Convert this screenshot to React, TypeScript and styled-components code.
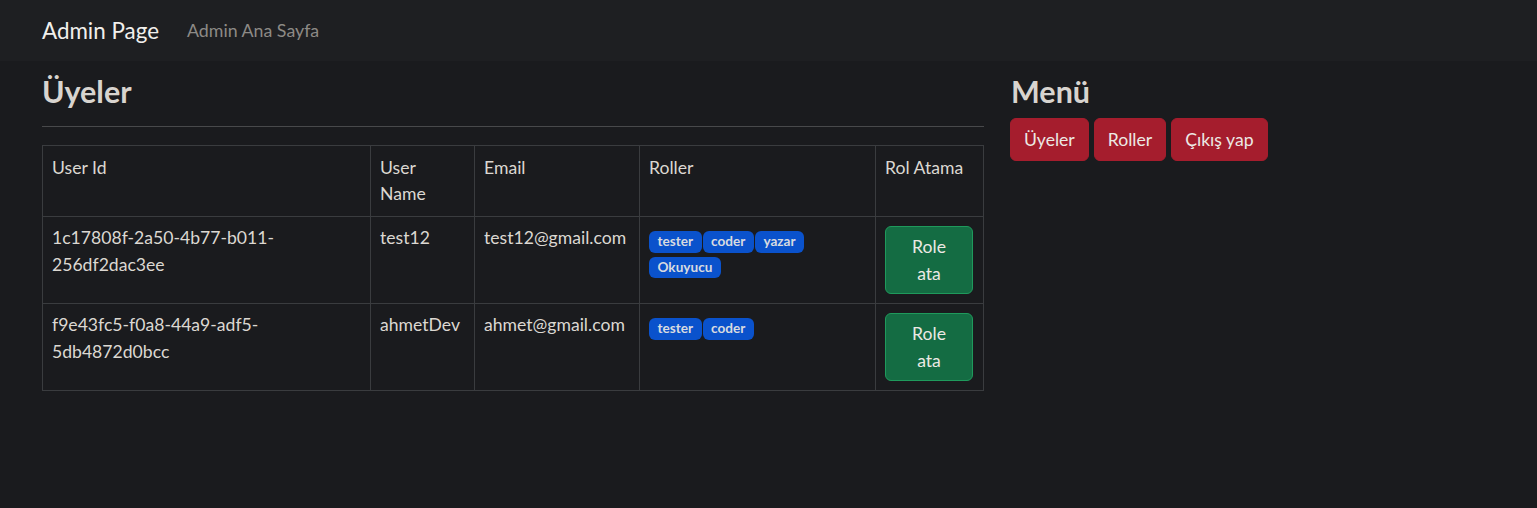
import React from "react";
import styled, { createGlobalStyle } from "styled-components";

const Global = createGlobalStyle`
  html, body { margin: 0; padding: 0; }
  body {
    background: #1a1b1e;
    color: #dcd8d2;
    font-family: "Lato", "Noto Sans", sans-serif;
    font-size: 17.6px;
    line-height: 1.5;
  }
  * { box-sizing: border-box; }
`;

const Navbar = styled.nav`
  height: 61px;
  background: #1e1f22;
  display: flex;
  align-items: center;
  padding: 0 42px;
  gap: 28px;
`;

const Brand = styled.a`
  font-size: 22.4px;
  color: #f1efec;
  text-decoration: none;
`;

const NavLink = styled.a`
  font-size: 17.8px;
  color: #8d8a86;
  text-decoration: none;
`;

const Row = styled.div`
  display: grid;
  grid-template-columns: 966px 1fr;
  padding: 0 30px;
`;

const Col = styled.div<{ $menu?: boolean }>`
  padding: 0 12px 0 ${(p) => (p.$menu ? "15px" : "12px")};
`;

const Heading = styled.h2`
  margin: 12px 0 0;
  font-size: 30.5px;
  font-weight: 700;
  line-height: 1.2;
  color: #d8d4cf;
`;

const Rule = styled.hr`
  margin: 16px 0 18px;
  border: 0;
  border-top: 1px solid #48494b;
`;

const Table = styled.table`
  width: 942px;
  border-collapse: collapse;
  table-layout: fixed;
`;

const Cell = styled.td`
  border: 1px solid #3a3c3f;
  padding: 8px 9px 9px;
  vertical-align: top;
  color: #dcd8d2;
  line-height: 26.4px;
`;

const HeadCell = styled(Cell).attrs({ as: "th" })`
  font-weight: 400;
  text-align: left;
  padding-top: 9px;
`;

const Badges = styled.div`
  display: flex;
  flex-wrap: wrap;
  gap: 4px 1px;
  padding-top: 6px;
`;

const Badge = styled.span`
  display: inline-block;
  background: #0a52cc;
  color: #d8dbe0;
  font-weight: 700;
  font-size: 13.6px;
  line-height: 1;
  padding: 4px 8.5px 3.5px;
  border-radius: 6px;
  min-height: 21px;
`;

const Button = styled.button<{ $variant: "danger" | "success" }>`
  font-family: inherit;
  font-size: 17.6px;
  line-height: 27px;
  padding: 6px 12px;
  border-radius: 6px;
  border: 1px solid ${(p) => (p.$variant === "danger" ? "#a51d2d" : "#1f9a5c")};
  background: ${(p) => (p.$variant === "danger" ? "#a51d2d" : "#146c43")};
  color: #ece9e4;
  cursor: pointer;
`;

const RoleButton = styled(Button)`
  width: 88px;
  margin-top: 1px;
`;

const MenuButton = styled(Button)`
  padding: 7px 13px;
`;

const MenuButtons = styled.div`
  display: flex;
  gap: 5px;
  margin-top: 8px;
  margin-left: -1px;
`;

const users = [
  {
    id: "1c17808f-2a50-4b77-b011-256df2dac3ee",
    name: "test12",
    email: "test12@gmail.com",
    roles: ["tester", "coder", "yazar", "Okuyucu"],
  },
  {
    id: "f9e43fc5-f0a8-44a9-adf5-5db4872d0bcc",
    name: "ahmetDev",
    email: "ahmet@gmail.com",
    roles: ["tester", "coder"],
  },
];

const widths = [328, 104, 165, 236, 108];

export default function App() {
  return (
    <>
      <Global />
      <Navbar>
        <Brand href="#">Admin Page</Brand>
        <NavLink href="#">Admin Ana Sayfa</NavLink>
      </Navbar>
      <Row>
        <Col>
          <Heading>Üyeler</Heading>
          <Rule />
          <Table>
            <colgroup>
              {widths.map((w, i) => (
                <col key={i} style={{ width: w }} />
              ))}
            </colgroup>
            <thead>
              <tr>
                <HeadCell>User Id</HeadCell>
                <HeadCell>User Name</HeadCell>
                <HeadCell>Email</HeadCell>
                <HeadCell>Roller</HeadCell>
                <HeadCell>Rol Atama</HeadCell>
              </tr>
            </thead>
            <tbody>
              {users.map((u) => (
                <tr key={u.id}>
                  <Cell>
                    {u.id.slice(0, 24)}
                    <br />
                    {u.id.slice(24)}
                  </Cell>
                  <Cell>{u.name}</Cell>
                  <Cell>{u.email}</Cell>
                  <Cell>
                    <Badges>
                      {u.roles.map((r) => (
                        <Badge key={r}>{r}</Badge>
                      ))}
                    </Badges>
                  </Cell>
                  <Cell>
                    <RoleButton $variant="success">Role ata</RoleButton>
                  </Cell>
                </tr>
              ))}
            </tbody>
          </Table>
        </Col>
        <Col $menu>
          <Heading>Menü</Heading>
          <MenuButtons>
            <MenuButton $variant="danger">Üyeler</MenuButton>
            <MenuButton $variant="danger">Roller</MenuButton>
            <MenuButton $variant="danger">Çıkış yap</MenuButton>
          </MenuButtons>
        </Col>
      </Row>
    </>
  );
}
